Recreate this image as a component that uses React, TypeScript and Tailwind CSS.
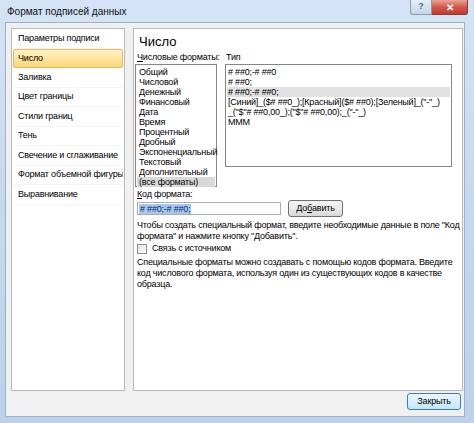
import React from "react";

const navItems = [
  "Параметры подписи",
  "Число",
  "Заливка",
  "Цвет границы",
  "Стили границ",
  "Тень",
  "Свечение и сглаживание",
  "Формат объемной фигуры",
  "Выравнивание",
];

const formats = [
  "Общий",
  "Числовой",
  "Денежный",
  "Финансовый",
  "Дата",
  "Время",
  "Процентный",
  "Дробный",
  "Экспоненциальный",
  "Текстовый",
  "Дополнительный",
  "(все форматы)",
];

const types = [
  "# ##0;-# ##0",
  "# ##0;",
  "# ##0;-# ##0;",
  '[Синий]_($# ##0_);[Красный]($# ##0);[Зеленый]_("-"_)',
  '_("$"# ##0,00_);("$"# ##0,00);_("-"_)',
  "МММ",
];

export default function App() {
  return (
    <div className="w-[474px] h-[423px] overflow-hidden bg-linear-to-b from-[#d4e4f6] via-[#c4d8ef] to-[#bcd2eb] font-['Liberation_Sans',Arial,sans-serif] text-[9px] tracking-[-0.2px] text-black">
      {/* Title bar */}
      <div className="h-[22px] flex items-start">
        <div className="pl-[7px] pt-[5px] text-[10px] leading-[13px] tracking-normal text-[#111]">
          Формат подписей данных
        </div>
        <div className="ml-auto mr-[6px] flex">
          <div className="w-[22px] h-[15px] flex items-center justify-center border border-[#8a9bb0] border-t-0 rounded-bl-[3px] bg-linear-to-b from-[#e6eef8] to-[#c5d5e8] text-[9px] font-bold text-[#5a6b7e]">
            ?
          </div>
          <div className="w-[36px] h-[15px] flex items-center justify-center border border-[#8a3a3a] border-t-0 border-l-0 rounded-br-[3px] bg-linear-to-b from-[#e9a394] via-[#d1584a] to-[#c23a2c] text-[10px] font-bold text-white">
            ✕
          </div>
        </div>
      </div>

      {/* Body */}
      <div className="ml-[5px] w-[460px] h-[395px] bg-[#f0f0f0] border border-[#9fb1c6] flex flex-col pt-[5px] pl-[5px]">
        <div className="flex gap-[8px] h-[363px]">
          {/* Nav panel */}
          <div className="w-[114px] h-full bg-white border border-[#b9b9b9] flex flex-col">
            {navItems.map((item, i) => (
              <div
                key={item}
                className={
                  i === 1
                    ? "h-[19.5px] mx-[1px] flex items-center pl-[4px] rounded-[2px] border border-[#e3bd63] bg-linear-to-b from-[#fef3c4] to-[#fbd675] whitespace-nowrap"
                    : "h-[19.5px] mx-[1px] flex items-center pl-[5px] border-b border-[#f4f4f4] whitespace-nowrap overflow-hidden"
                }
              >
                {item}
              </div>
            ))}
          </div>

          {/* Content panel */}
          <div className="w-[330px] h-full bg-white border border-[#b9b9b9] flex flex-col">
            <div className="ml-[5px] mt-[5px] text-[13px] leading-[15px] tracking-normal">Число</div>

            <div className="flex mt-[3px] ml-[1px]">
              <div className="w-[82px] flex flex-col">
                <div className="ml-[2px] h-[10px] leading-[10px] whitespace-nowrap">
                  <span className="underline">Ч</span>исловые форматы:
                </div>
                <div className="mt-[2px] h-[123px] border border-[#828790] flex flex-col pt-[2px] px-[1px]">
                  {formats.map((f, i) => (
                    <div
                      key={f}
                      className={
                        i === formats.length - 1
                          ? "h-[10px] leading-[10px] pl-[2px] bg-[#d9d9d9] whitespace-nowrap"
                          : "h-[10px] leading-[10px] pl-[2px] whitespace-nowrap"
                      }
                    >
                      {f}
                    </div>
                  ))}
                </div>
              </div>

              <div className="ml-[8px] w-[227px] flex flex-col">
                <div className="ml-[1px] h-[10px] leading-[10px]">Тип</div>
                <div className="mt-[2px] h-[103px] border border-[#828790] flex flex-col pt-[2px] px-[1px] overflow-hidden">
                  {types.map((t, i) => (
                    <div
                      key={t}
                      className={
                        i === 2
                          ? "h-[10px] leading-[10px] pl-[1px] bg-[#e1e1e1] whitespace-nowrap"
                          : "h-[10px] leading-[10px] pl-[1px] whitespace-nowrap"
                      }
                    >
                      {t}
                    </div>
                  ))}
                </div>
              </div>
            </div>

            <div className="ml-[3px] mt-[2px] h-[10px] leading-[10px]">
              <span className="underline">К</span>од формата:
            </div>
            <div className="ml-[3px] mt-[1px] flex items-center">
              <div className="w-[144px] h-[13px] border border-[#abadb3] flex items-center px-[1px]">
                <span className="bg-[#a7c8ee] text-[#0d2c6b] leading-[10px] px-[1px]">
                  # ##0;-# ##0;
                </span>
              </div>
              <div className="ml-[7px] w-[55px] h-[17px] rounded-[3px] border border-[#707070] bg-linear-to-b from-[#f4f4f4] via-[#ebebeb] to-[#d8d8d8] flex items-center justify-center">
                До<span className="underline">б</span>авить
              </div>
            </div>

            <div className="ml-[3px] mt-[3px] leading-[11px] whitespace-nowrap">
              Чтобы создать специальный формат, введите необходимые данные в поле "Код
              <br />
              формата" и нажмите кнопку "Добавить".
            </div>

            <div className="ml-[3px] mt-[1px] h-[11px] flex items-center">
              <div className="w-[10px] h-[10px] border border-[#8f8f8f] bg-linear-to-br from-[#e4e4e4] to-[#fafafa]" />
              <span className="ml-[5px]">Связь с источником</span>
            </div>

            <div className="ml-[3px] mt-[3px] leading-[11px] whitespace-nowrap">
              Специальные форматы можно создавать с помощью кодов формата. Введите
              <br />
              код числового формата, используя один из существующих кодов в качестве
              <br />
              образца.
            </div>
          </div>
        </div>

        <div className="flex justify-end mt-[2px] pr-[3px]">
          <div className="w-[54px] h-[17px] rounded-[3px] border border-[#3c7fb1] bg-linear-to-b from-[#eaf6fd] via-[#d9f0fc] to-[#bee6fd] flex items-center justify-center">
            Закрыть
          </div>
        </div>
      </div>
    </div>
  );
}
